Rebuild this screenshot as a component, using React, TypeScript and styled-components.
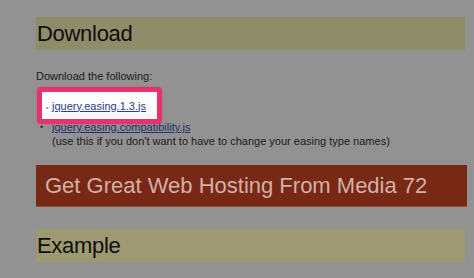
import React from "react";
import styled, { createGlobalStyle } from "styled-components";

const Global = createGlobalStyle`
  html, body { margin: 0; padding: 0; background: #929292; }
  body { font-family: "Liberation Sans", Arial, Helvetica, sans-serif; }
`;

const Page = styled.div`
  width: 474px;
  height: 278px;
  overflow: hidden;
  background: #929292;
  padding: 17px 7px 0 36px;
  box-sizing: border-box;
`;

const Band = styled.h2<{ $tone: string }>`
  margin: 0 2px 0 0;
  height: 33px;
  line-height: 33px;
  background: ${(p) => p.$tone};
  color: #0e0e0c;
  font-size: 22px;
  font-weight: normal;
  padding-left: 1px;
  letter-spacing: -0.3px;
`;

const Intro = styled.p`
  margin: 19px 0 0;
  font-size: 11px;
  line-height: 14px;
  color: #1a1a1a;
`;

const List = styled.ul`
  list-style: none;
  margin: 23px 0 0;
  padding: 0;
  font-size: 11px;
  line-height: 14px;
  color: #1a1a1a;
`;

const Item = styled.li<{ $callout?: boolean }>`
  display: flex;
  position: ${(p) => (p.$callout ? "relative" : "static")};
  height: ${(p) => (p.$callout ? "14px" : "auto")};
`;

const Marker = styled.span`
  width: 16px;
  flex: none;
  padding-left: 4px;
  box-sizing: border-box;
  color: #333;
  font-size: 9px;
`;

const Body = styled.div``;

const Link = styled.a<{ $bright?: boolean }>`
  color: ${(p) => (p.$bright ? "#2d3c86" : "#262f68")};
  text-decoration: underline;
`;

const Callout = styled.div`
  position: absolute;
  left: 1px;
  top: -19px;
  width: 125px;
  height: 37px;
  box-sizing: border-box;
  border: 5px solid #e6346b;
  border-radius: 4px;
  background: #fbfbfb;
  display: flex;
  align-items: center;
  font-size: 11px;
  line-height: 14px;
  box-shadow: 0 0 2px rgba(230, 52, 107, 0.6);
  z-index: 1;
`;

const CalloutMarker = styled.span`
  width: 10px;
  flex: none;
  padding-left: 4px;
  box-sizing: border-box;
  color: #888;
  font-size: 7px;
  padding-top: 4px;
`;

const Promo = styled.div`
  margin-top: 17px;
  height: 42px;
  line-height: 42px;
  background: #772916;
  color: #d4afa6;
  font-size: 22px;
  padding-left: 9px;
  border-bottom: 1px solid #8a4a3a;
  box-sizing: border-box;
`;

const Spacer = styled.div`
  height: 22px;
`;

export default function App() {
  return (
    <>
      <Global />
      <Page>
        <Band $tone="#8f8c69">Download</Band>
        <Intro>Download the following:</Intro>
        <List>
          <Item $callout>
            <Callout>
              <CalloutMarker>•</CalloutMarker>
              <Link href="#" $bright>
                jquery.easing.1.3.js
              </Link>
            </Callout>
          </Item>
          <Item>
            <Marker>•</Marker>
            <Body>
              <Link href="#">jquery.easing.compatibility.js</Link>
              <br />
              (use this if you don't want to have to change your easing type names)
            </Body>
          </Item>
        </List>
        <Promo>Get Great Web Hosting From Media 72</Promo>
        <Spacer />
        <Band $tone="#9c9973">Example</Band>
      </Page>
    </>
  );
}
